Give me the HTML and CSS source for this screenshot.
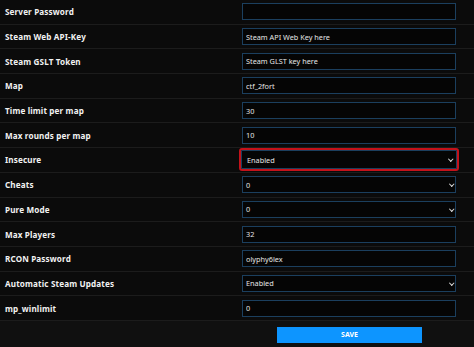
FILE: index.html
```html
<!DOCTYPE html>
<html lang="en">

<head>
    <meta charset="UTF-8">
    <meta name="viewport" content="width=device-width, initial-scale=1.0">
    <title>Server Settings</title>
    <link rel="stylesheet" href="styles.css">
</head>

<body>
    <div class="settings">
        <!-- Settings rows -->
        <div class="row">
            <label>Server Password</label>
            <input type="text" value="">
        </div>
        <div class="row">
            <label>Steam Web API-Key</label>
            <input type="text" value="Steam API Web Key here">
        </div>
        <div class="row">
            <label>Steam GSLT Token</label>
            <input type="text" value="Steam GLST key here">
        </div>
        <div class="row">
            <label>Map</label>
            <input type="text" value="ctf_2fort">
        </div>
        <div class="row">
            <label>Time limit per map</label>
            <input type="text" value="30">
        </div>
        <div class="row">
            <label>Max rounds per map</label>
            <input type="text" value="10">
        </div>
        <div class="row">
            <label>Insecure</label>
            <div class="select focused"><span>Enabled</span><i class="chev"></i></div>
        </div>
        <div class="row">
            <label>Cheats</label>
            <div class="select"><span>0</span><i class="chev"></i></div>
        </div>
        <div class="row">
            <label>Pure Mode</label>
            <div class="select"><span>0</span><i class="chev"></i></div>
        </div>
        <div class="row">
            <label>Max Players</label>
            <input type="text" value="32">
        </div>
        <div class="row">
            <label>RCON Password</label>
            <input type="text" value="olyphy6lex">
        </div>
        <div class="row">
            <label>Automatic Steam Updates</label>
            <div class="select"><span>Enabled</span><i class="chev"></i></div>
        </div>
        <div class="row">
            <label>mp_winlimit</label>
            <input type="text" value="0">
        </div>

        <!-- Save -->
        <div class="actions">
            <button class="save">SAVE</button>
        </div>
    </div>
</body>

</html>
```

FILE: styles.css
```css
/* Dark settings table */
body {
    margin: 0;
    background: #101010;
    font-family: "Noto Sans", "Open Sans", sans-serif;
    color: #fff;
}

.settings {
    width: 474px;
    height: 347px;
    overflow: hidden;
}

.row {
    display: grid;
    grid-template-columns: 242px 214px;
    align-items: center;
    height: 24.7px;
    box-sizing: border-box;
    background: #0b0b0b;
    border-bottom: 1px solid #1c1c1c;
}

.row label {
    padding-left: 5px;
    font-size: 8.1px;
    font-weight: 700;
    color: #f2f2f2;
    letter-spacing: 0.15px;
}

.row input,
.select {
    width: 214px;
    height: 17px;
    box-sizing: border-box;
    margin: 0;
    padding: 0 0 0 3px;
    background: #050505;
    border: 1px solid #1b3f5e;
    color: #e6e6e6;
    font-family: "Noto Sans", "Open Sans", sans-serif;
    font-size: 7.3px;
    outline: none;
}

.select {
    display: flex;
    align-items: center;
    justify-content: space-between;
    padding-right: 2px;
}

.select.focused {
    width: 220px;
    height: 23px;
    margin-left: -3px;
    padding-left: 6px;
    padding-right: 5px;
    border: 2px solid #c4121a;
    border-radius: 3px;
    box-shadow: inset 0 0 0 1px #1b3f5e;
}

.chev {
    width: 2.5px;
    height: 2.5px;
    border-right: 1.3px solid #e0e0e0;
    border-bottom: 1.3px solid #e0e0e0;
    transform: rotate(45deg);
    margin-top: -2px;
}

.actions {
    display: flex;
    padding: 6px 0 0 277px;
}

.save {
    width: 145px;
    height: 16px;
    border: none;
    background: #0d95ff;
    color: #fff;
    font-family: "Noto Sans", "Open Sans", sans-serif;
    font-size: 7px;
    font-weight: 700;
    padding: 0;
}
```
